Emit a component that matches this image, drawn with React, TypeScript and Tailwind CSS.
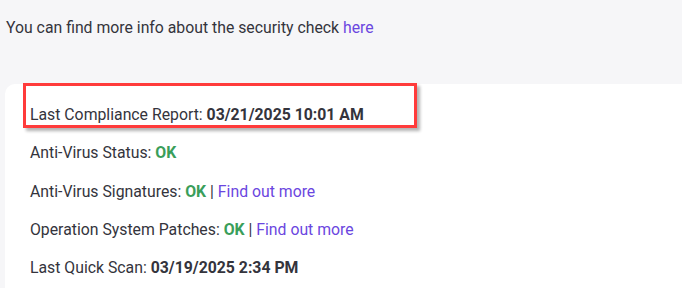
import React from "react";

const rows = [
  { label: "Anti-Virus Status:", value: "OK", ok: true, link: false },
  { label: "Anti-Virus Signatures:", value: "OK", ok: true, link: true },
  { label: "Operation System Patches:", value: "OK", ok: true, link: true },
  { label: "Last Quick Scan:", value: "03/19/2025 2:34 PM", ok: false, link: false },
];

export default function App() {
  return (
    <div
      className="relative h-[288px] w-[682px] overflow-hidden bg-[#f6f6f8] text-[15.8px] leading-[20px] text-[#34343c]"
      style={{ fontFamily: "Roboto, 'Liberation Sans', sans-serif" }}
    >
      <p className="px-[6px] pt-[18px]">
        You can find more info about the security check{" "}
        <a href="#" className="text-[#6b46e0]">
          here
        </a>
      </p>

      <div className="mt-[46px] ml-[5px] h-[300px] rounded-tl-[10px] bg-white pl-[25px] pt-[21px]">
        <div className="flex flex-col gap-[18.3px]">
          <div>
            Last Compliance Report: <span className="font-bold">03/21/2025 10:01 AM</span>
          </div>
          {rows.map((r) => (
            <div key={r.label}>
              {r.label}{" "}
              <span className={r.ok ? "font-bold text-[#3a9e5a]" : "font-bold"}>{r.value}</span>
              {r.link && (
                <>
                  {" | "}
                  <a href="#" className="text-[#6b46e0]">
                    Find out more
                  </a>
                </>
              )}
            </div>
          ))}
        </div>
      </div>

      {/* highlight annotation */}
      <div className="absolute left-[23px] top-[83px] h-[45px] w-[394px] border-[3px] border-[#ff3b3b] shadow-[3px_3px_3px_rgba(0,0,0,0.3)]" />
    </div>
  );
}
